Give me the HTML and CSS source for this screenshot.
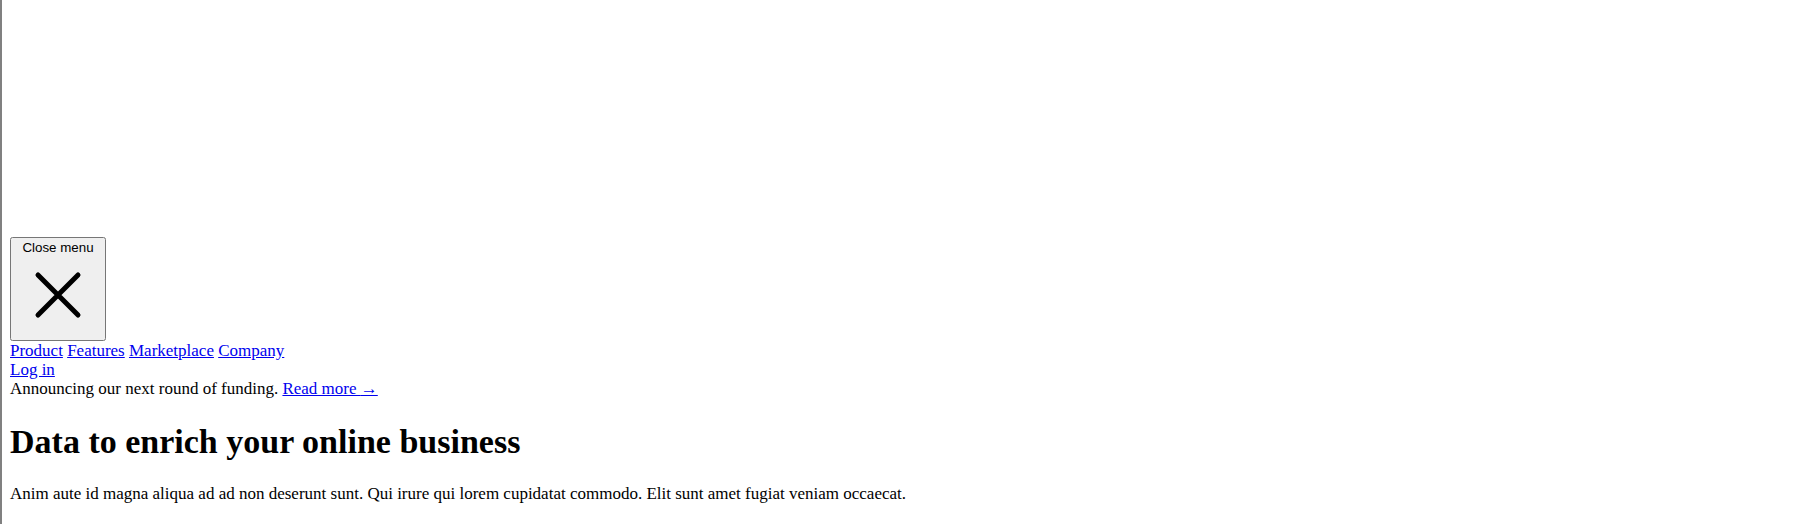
FILE: index.html
```html
<!DOCTYPE html>
<html lang="en">
<head>
<meta charset="utf-8">
<title>Data to enrich your online business</title>
<link rel="stylesheet" href="styles.css">
</head>
<body>
<div class="page">
  <header class="header">
    <div class="header-space"></div>
    <div class="menu">
      <button type="button" class="close-btn">
        <span class="close-label">Close menu</span>
        <svg class="close-icon" viewBox="0 0 24 24" fill="none" stroke="currentColor" stroke-width="1.5" aria-hidden="true">
          <path stroke-linecap="round" stroke-linejoin="round" d="M6 18L18 6M6 6l12 12"/>
        </svg>
      </button>
      <div class="nav-links">
        <a href="#">Product</a> <a href="#">Features</a> <a href="#">Marketplace</a> <a href="#">Company</a>
      </div>
      <div class="login">
        <a href="#">Log in</a>
      </div>
    </div>
  </header>
  <main class="hero">
    <div class="announce">Announcing our next round of funding. <a href="#">Read more <span class="arrow" aria-hidden="true">&rarr;</span></a></div>
    <h1 class="title">Data to enrich your online business</h1>
    <p class="lead">Anim aute id magna aliqua ad ad non deserunt sunt. Qui irure qui lorem cupidatat commodo. Elit sunt amet fugiat veniam occaecat.</p>
  </main>
</div>
</body>
</html>
```
FILE: styles.css
```css
html, body {
  margin: 0;
  padding: 0;
  background: #ffffff;
}

body {
  font-family: "Liberation Serif", "Times New Roman", serif;
  font-size: 17px;
  line-height: 19px;
  color: #000000;
}

.page {
  box-sizing: border-box;
  min-height: 100vh;
  border-left: 2px solid #808080;
  padding: 8px;
}

.header-space {
  height: 229px;
}

.close-btn {
  font-family: "Liberation Sans", Arial, sans-serif;
  font-size: 13.333px;
  line-height: normal;
  color: #000000;
}

.close-label {
  display: block;
}

.close-icon {
  width: 80px;
  height: 80px;
  vertical-align: baseline;
}

a {
  color: #0000ee;
}

.arrow {
  font-family: "Liberation Sans", Arial, sans-serif;
}

.title {
  font-size: 34px;
  line-height: normal;
  font-weight: bold;
  margin: 25px 0 22.78px;
}

.lead {
  margin: 1em 0 0;
}
```
